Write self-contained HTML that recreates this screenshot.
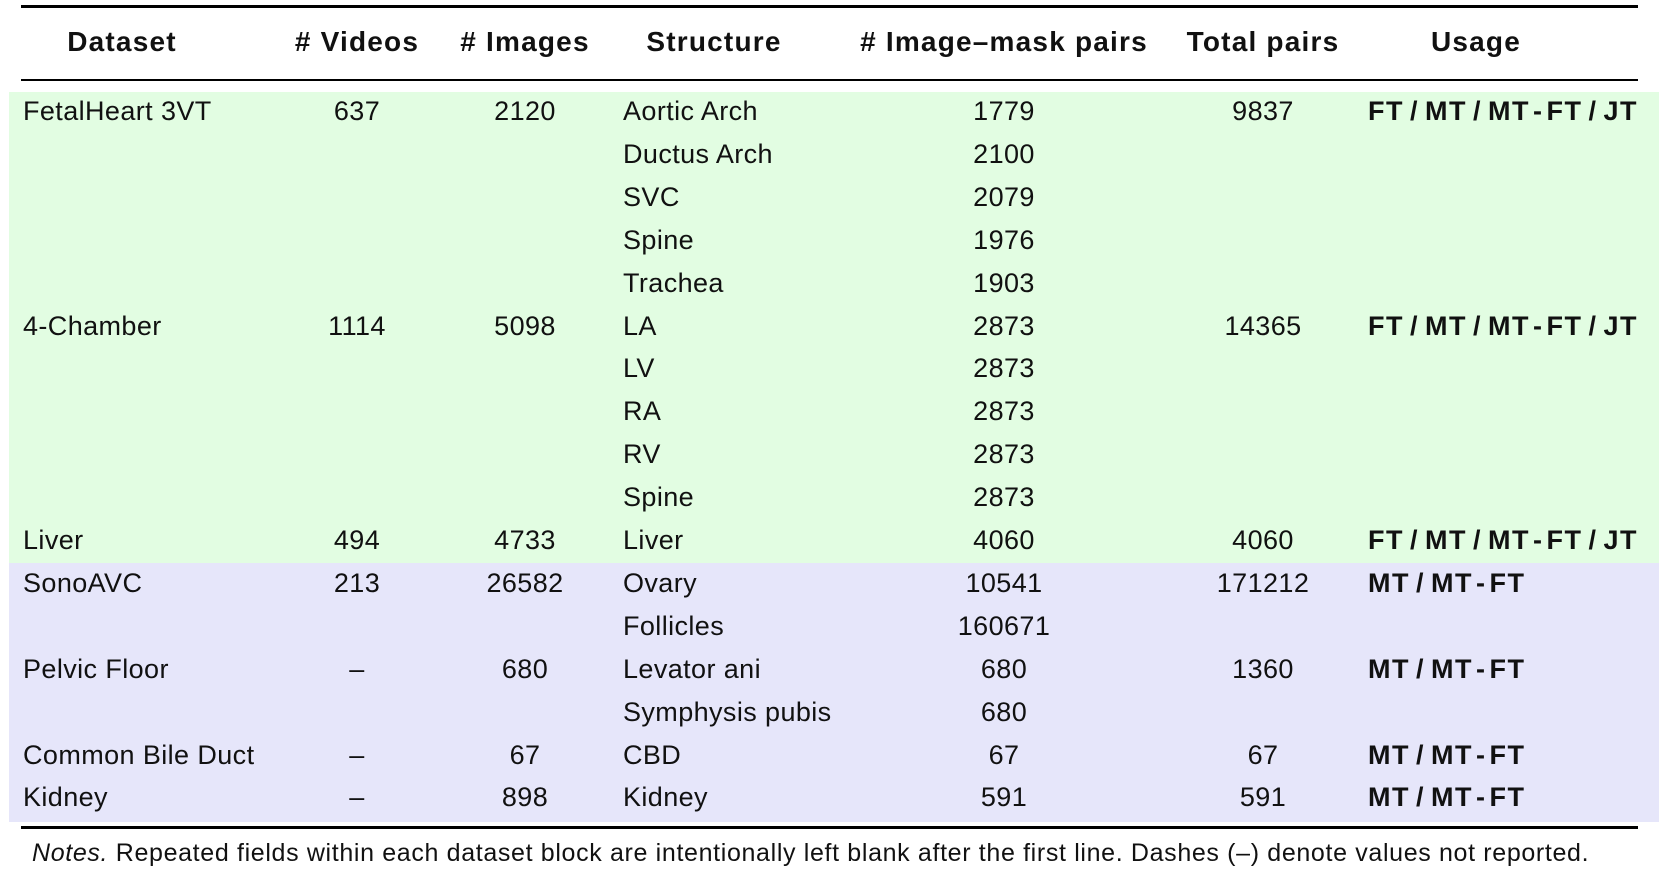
<!DOCTYPE html>
<html><head><meta charset="utf-8"><style>
body{margin:0;width:1659px;height:872px;background:#fff;position:relative;overflow:hidden;font-family:"Liberation Sans",sans-serif;color:#111}
.b{position:absolute;left:9px;width:1650px}
.r{position:absolute;background:#000}
.t{position:absolute;font-size:27px;line-height:30px;white-space:nowrap;letter-spacing:0.4px}
.c{width:240px;text-align:center}
.h{font-weight:bold;font-size:28px;letter-spacing:1.2px}
.u{font-weight:bold;letter-spacing:1.5px}
.u s{text-decoration:none;margin:0 6px}
</style></head><body>
<div class="b" style="top:92px;height:471px;background:#e2fde2"></div>
<div class="b" style="top:563px;height:259px;background:#e6e6fa"></div>
<div class="r" style="left:21px;width:1617px;top:5px;height:3px"></div>
<div class="r" style="left:21px;width:1617px;top:79px;height:2px"></div>
<div class="r" style="left:21px;width:1617px;top:826px;height:3px"></div>

<div class="t h c" style="left:2px;top:27px">Dataset</div>
<div class="t h c" style="left:237px;top:27px"># Videos</div>
<div class="t h c" style="left:405px;top:27px"># Images</div>
<div class="t h c" style="left:594px;top:27px">Structure</div>
<div class="t h c" style="left:834px;top:27px;width:340px;"># Image–mask pairs</div>
<div class="t h c" style="left:1143px;top:27px">Total pairs</div>
<div class="t h c" style="left:1356px;top:27px">Usage</div>

<div id="rows"></div>
<script>
var R=[
["FetalHeart 3VT","637","2120","Aortic Arch","1779","9837","FT/MT/MT-FT/JT"],
["","","","Ductus Arch","2100","",""],
["","","","SVC","2079","",""],
["","","","Spine","1976","",""],
["","","","Trachea","1903","",""],
["4-Chamber","1114","5098","LA","2873","14365","FT/MT/MT-FT/JT"],
["","","","LV","2873","",""],
["","","","RA","2873","",""],
["","","","RV","2873","",""],
["","","","Spine","2873","",""],
["Liver","494","4733","Liver","4060","4060","FT/MT/MT-FT/JT"],
["SonoAVC","213","26582","Ovary","10541","171212","MT/MT-FT"],
["","","","Follicles","160671","",""],
["Pelvic Floor","–","680","Levator ani","680","1360","MT/MT-FT"],
["","","","Symphysis pubis","680","",""],
["Common Bile Duct","–","67","CBD","67","67","MT/MT-FT"],
["Kidney","–","898","Kidney","591","591","MT/MT-FT"]];
var h="";
for(var i=0;i<R.length;i++){var y=(96+42.9*i).toFixed(1),r=R[i];
h+='<div class="t" style="left:23px;top:'+y+'px">'+r[0]+'</div>';
h+='<div class="t c" style="left:237px;top:'+y+'px">'+r[1]+'</div>';
h+='<div class="t c" style="left:405px;top:'+y+'px">'+r[2]+'</div>';
h+='<div class="t" style="left:623px;top:'+y+'px">'+r[3]+'</div>';
h+='<div class="t c" style="left:884px;top:'+y+'px">'+r[4]+'</div>';
h+='<div class="t c" style="left:1143px;top:'+y+'px">'+r[5]+'</div>';
h+='<div class="t u" style="left:1368px;top:'+y+'px">'+r[6].split("/").join("<s>/</s>").replace(/-/g,'<s style="margin:0 3px">-</s>')+'</div>';}
document.getElementById("rows").innerHTML=h;
</script>
<div class="t" style="left:32px;top:838px;font-size:25px;letter-spacing:0.65px"><i>Notes.</i> Repeated fields within each dataset block are intentionally left blank after the first line. Dashes (–) denote values not reported.</div>
</body></html>
